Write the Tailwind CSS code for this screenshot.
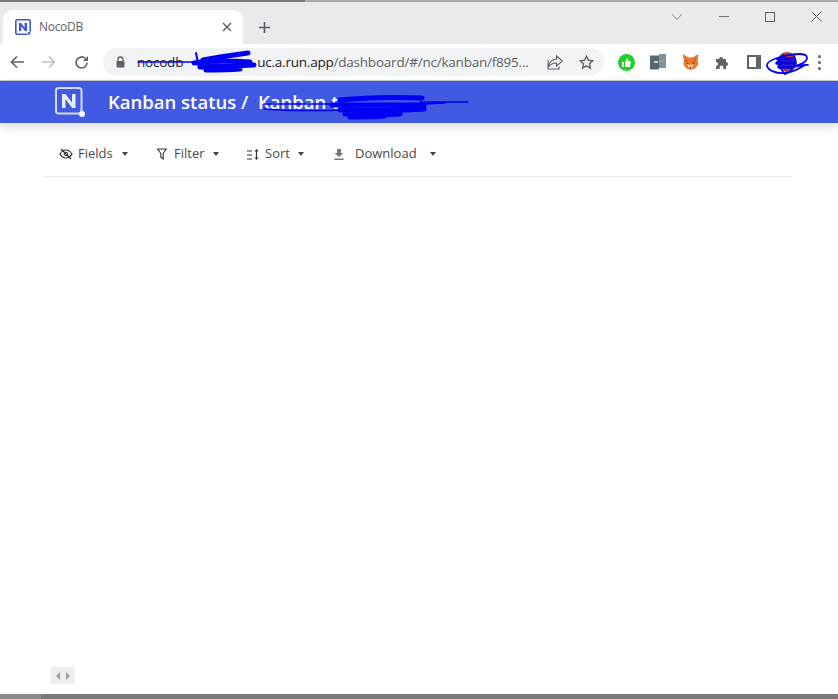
<!DOCTYPE html>
<html>
<head>
<meta charset="utf-8">
<script src="https://cdn.jsdelivr.net/npm/@tailwindcss/browser@4"></script>
</head>
<body class="bg-white">
<div class="relative w-[838px] h-[699px] overflow-hidden flex flex-col bg-white font-['Roboto','Liberation_Sans',sans-serif]">
  <div class="h-[2px] shrink-0 flex"><div class="w-[305px] bg-[#7a7a7a]"></div><div class="flex-1 bg-[#ababab]"></div></div>
  <div class="h-[42px] shrink-0 bg-[#e8eaed] flex items-end relative">
    <div class="ml-[3px] w-[240px] h-[34px] bg-white rounded-t-[9px] flex items-center pl-[12px] pr-[11px]">
      <svg class="w-[16px] h-[16px] shrink-0" viewBox="0 0 16 16"><rect x="0.8" y="0.8" width="14.4" height="14.4" rx="1.5" fill="#fff" stroke="#3e56d8" stroke-width="1.6"/><path d="M4 12V4h2.2l3.4 4.6V4H12v8H9.9L6.3 7.2V12z" fill="#3e56d8"/><circle cx="14" cy="14" r="1.6" fill="#3e56d8" stroke="#fff" stroke-width=".6"/></svg>
      <span class="ml-[8px] text-[12px] text-[#5f6368] flex-1 font-['Open_Sans',sans-serif] tracking-[-0.3px]">NocoDB</span>
      <svg class="w-[10px] h-[10px]" viewBox="0 0 10 10"><path d="M1 1l8 8M9 1l-8 8" stroke="#5f6368" stroke-width="1.5"/></svg>
    </div>
    <svg class="ml-[15px] mb-[10px] w-[13px] h-[13px]" viewBox="0 0 13 13"><path d="M6.5 1v11M1 6.5h11" stroke="#5a5d61" stroke-width="1.6"/></svg>
    <div class="ml-auto mr-[16px] self-start mt-[9px] flex items-center gap-[36px]">
      <svg class="w-[12px] h-[8px]" viewBox="0 0 12 8"><path d="M1 1l5 5.5L11 1" fill="none" stroke="#8a8c90" stroke-width="1"/></svg>
      <div class="w-[10px] h-px bg-[#777]"></div>
      <div class="w-[10px] h-[10px] border border-[#666]"></div>
      <svg class="w-[11px] h-[11px]" viewBox="0 0 11 11"><path d="M.5.5l10 10M10.5.5l-10 10" stroke="#666" stroke-width="1"/></svg>
    </div>
  </div>
  <div class="h-[36px] shrink-0 bg-white flex items-center pl-[10px]">
    <svg class="w-[14px] h-[14px]" viewBox="0 0 14 14"><path d="M14 7H2M7 1.5L1.5 7 7 12.5" fill="none" stroke="#5f6368" stroke-width="1.7"/></svg>
    <svg class="ml-[18px] w-[14px] h-[14px]" viewBox="0 0 14 14"><path d="M0 7h12M7 1.5L12.5 7 7 12.5" fill="none" stroke="#bdc0c4" stroke-width="1.7"/></svg>
    <svg class="ml-[18px] w-[15px] h-[15px]" viewBox="0 0 15 15"><path d="M13 7.5A5.5 5.5 0 1 1 11.3 3.5" fill="none" stroke="#5f6368" stroke-width="1.7"/><path d="M14 1v5H9z" fill="#5f6368"/></svg>
    <div class="ml-[14px] w-[501px] h-[28px] rounded-full bg-[#f1f3f4] flex items-center pl-[13px]">
      <svg class="w-[9px] h-[12px] shrink-0" viewBox="0 0 9 12"><path d="M2 5V3.5a2.5 2.5 0 0 1 5 0V5" fill="none" stroke="#5f6368" stroke-width="1.3"/><rect x="0.5" y="5" width="8" height="6.5" rx="1" fill="#5f6368"/></svg>
      <span class="ml-[12px] text-[13.5px] w-[397px] whitespace-nowrap overflow-hidden font-['Open_Sans',sans-serif] text-[#5f6368] tracking-[-0.22px]"><span class="text-[#202124]">nocodb<span class="inline-block w-[74px]"></span>uc.a.run.app</span>/dashboard/#/nc/kanban/f895...</span>
      <svg class="ml-[13px] w-[16px] h-[15px] shrink-0" viewBox="0 0 16 15"><path d="M9.5 1l6 5-6 5V8C6 8 3.5 9 1.5 12 2 8 4.500 4.500 9.500 4zM1 5v9h11v-2.500" fill="none" stroke="#5f6368" stroke-width="1.100"/></svg>
      <svg class="ml-[16px] w-[15px] h-[15px] shrink-0" viewBox="0 0 15 15"><path d="M7.500 1.300l1.900 4 4.300.5-3.200 3 .9 4.300-3.900-2.200-3.900 2.200.9-4.300-3.200-3 4.300-.5z" fill="none" stroke="#5f6368" stroke-width="1.400"/></svg>
    </div>
    <svg class="ml-[14px] w-[17px] h-[17px]" viewBox="0 0 17 17"><circle cx="8.500" cy="8.500" r="8.500" fill="#1ed02a"/><path d="M4 8h2v5H4zM7 8l2-4c1 0 1.500.8 1.300 2L10 7h3l-1 6H7z" fill="#fff"/></svg>
    <svg class="ml-[15px] w-[16px] h-[16px]" viewBox="0 0 16 16"><rect x="0" y="1.500" width="9" height="14" fill="#546a76"/><rect x="9" y="0" width="7" height="14" fill="#7d949e"/><path d="M4 8h4" stroke="#fff" stroke-width="1.300"/><path d="M9 7h5" stroke="#f0922b" stroke-width="1.300"/></svg>
    <svg class="ml-[16px] w-[17px] h-[16px]" viewBox="0 0 17 16"><path d="M0.500 0l6 3.500h4l6-3.500-1 7 .8 3-2.500 4-3 1.500h-4l-3-1.500-2.500-4 .8-3z" fill="#e8772a"/><path d="M3 5l3 1.500-2 1.500zM14 5l-3 1.500 2 1.500z" fill="#c65f1c"/><path d="M5 10l3.500 1 3.500-1-2 4H7z" fill="#f3d6b8"/><path d="M7.500 13h2l-1 1.500z" fill="#333"/><path d="M4.500 8.200l2 .8-.6 1.200zM12.500 8.200l-2 .8.6 1.200z" fill="#3a2a20"/></svg>
    <svg class="ml-[16px] w-[15px] h-[15px]" viewBox="0 0 15 15"><path d="M1 4h3a2 2 0 1 1 4 0h3v3a2 2 0 1 1 0 4v3H8a2 2 0 1 0-3 0H1v-3a2 2 0 1 0 0-4z" fill="#5f6368"/></svg>
    <div class="ml-[17px] w-[14px] h-[14px] border-[2px] border-r-[5px] border-[#5f6368] bg-white"></div>
    <div class="ml-[16px] w-[20px] h-[20px] rounded-full bg-[#b9411f]"></div>
    <div class="ml-[21px] flex flex-col gap-[3px]">
      <div class="w-[3px] h-[3px] rounded-full bg-[#5f6368]"></div>
      <div class="w-[3px] h-[3px] rounded-full bg-[#5f6368]"></div>
      <div class="w-[3px] h-[3px] rounded-full bg-[#5f6368]"></div>
    </div>
  </div>
  <div class="h-px shrink-0 bg-[#c9cbcf]"></div>
  <header class="h-[42px] shrink-0 bg-[#4259e2] flex items-center pl-[55px] shadow-[0_4px_10px_rgba(0,0,0,0.14)] relative">
    <svg class="w-[30px] h-[30px]" viewBox="0 0 30 30"><rect x="1" y="1" width="25.500" height="25.500" rx="2.500" fill="none" stroke="#d4d9f5" stroke-width="2"/><path d="M7 21V7h3.500l6.500 8.500V7h3.500v14h-3.300l-6.700-8.800V21z" fill="#e8eaf8"/><circle cx="27" cy="27" r="3" fill="#fff"/></svg>
    <h1 class="ml-[23px] text-[18.5px] font-semibold text-white whitespace-nowrap font-['Open_Sans',sans-serif]">Kanban status / <span class="ml-[5px]">Kanban tr</span></h1>
  </header>
  <div class="mx-[43px] w-[749px] h-[54px] shrink-0 border-b border-[#ececec] flex items-center pl-[16px] pt-[9px] text-[13px] text-[#4a4a4a] font-['Open_Sans',sans-serif]">
    <div class="flex items-center w-[97px]">
      <svg class="w-[14px] h-[14px]" viewBox="0 0 14 14"><path d="M1 7s2.300-4 6-4 6 4 6 4-2.300 4-6 4-6-4-6-4z" fill="none" stroke="#333" stroke-width="1.200"/><circle cx="7" cy="7" r="1.800" fill="none" stroke="#333"/><path d="M2 2l10 10" stroke="#333" stroke-width="1.200"/></svg>
      <span class="ml-[5px]">Fields</span>
      <span class="ml-[9px] w-0 h-0 border-x-[3.500px] border-x-transparent border-t-[4px] border-t-[#444]"></span>
    </div>
    <div class="flex items-center w-[90px]">
      <svg class="ml-[1px] w-[10px] h-[12px]" viewBox="0 0 11 13"><path d="M.8 1h9.400L6.800 6v6L4.200 10V6z" fill="none" stroke="#333" stroke-width="1.200"/></svg>
      <span class="ml-[7px]">Filter</span>
      <span class="ml-[8px] w-0 h-0 border-x-[3.500px] border-x-transparent border-t-[4px] border-t-[#444]"></span>
    </div>
    <div class="flex items-center w-[86px]">
      <svg class="w-[14px] h-[13px]" viewBox="0 0 14 13"><path d="M1 3h5M1 7h5M1 11h5M10.500 2v9" stroke="#333" stroke-width="1.200" fill="none"/><path d="M8.500 3.500l2-2.500 2 2.500M8.500 9.500l2 2.500 2-2.500" fill="#333"/></svg>
      <span class="ml-[5px]">Sort</span>
      <span class="ml-[8px] w-0 h-0 border-x-[3.500px] border-x-transparent border-t-[4px] border-t-[#444]"></span>
    </div>
    <div class="flex items-center">
      <svg class="ml-[1px] w-[12px] h-[12px]" viewBox="0 0 12 12"><path d="M4 1h4v4h2.500L6 9 1.500 5H4zM1.500 10.500h9V12h-9z" fill="#777"/></svg>
      <span class="ml-[10px]">Download</span>
      <span class="ml-[13px] w-0 h-0 border-x-[3.500px] border-x-transparent border-t-[4px] border-t-[#444]"></span>
    </div>
  </div>
  <div class="flex-1"></div>
  <div class="ml-[51px] mb-[10px] w-[24px] h-[17px] bg-[#eeeeee] flex items-center justify-center gap-[6px] shrink-0">
    <span class="w-0 h-0 border-y-[4px] border-y-transparent border-r-[4px] border-r-[#a0a0a0]"></span>
    <span class="w-0 h-0 border-y-[4px] border-y-transparent border-l-[4px] border-l-[#a0a0a0]"></span>
  </div>
  <div class="h-[5px] shrink-0 flex"><div class="w-[41px] bg-[#8a8a8a]"></div><div class="flex-1 bg-[#7a7a7a]"></div></div>
  <svg class="absolute left-0 top-0 w-[838px] h-[130px] pointer-events-none" viewBox="0 0 838 130" fill="none" stroke="#0000f5" stroke-linecap="round" stroke-linejoin="round">
    <path d="M138 62H195" stroke-width="1.300"/>
    <path d="M203 60c15-3 30-5 45-7M194 63c20-3 40-2 56-1M200 67c18-1 36-1 54-2M206 70c12 0 22 0 34-1" stroke-width="5"/>
    <path d="M196 53l3 15" stroke-width="2"/>
    <path d="M340 100c30-3 55-3 82-2M332 105H424M340 110c30 0 60 1 84-1M345 114c20 2 40 1 55 0M350 117c15 0 25 0 34-1" stroke-width="5"/>
    <path d="M264 104H340M264 109c25 2 50 2 80 1M420 102H468M400 105l45-2" stroke-width="1.300"/>
    <path d="M767 66c-1-5 9-8 17-10 10-2 23-4 23 2 0 4-8 8-17 9 6 0 15-3 18-2M767 66c1 4 9 8 18 7 10-1 15-5 20-8M783 55c-4 5-4 14 2 19 6-1 12-10 9-18" stroke-width="1.800"/>
    <path d="M778 59h14M777 63h18M779 67h12" stroke-width="3.500"/>
  </svg>
</div>
</body>
</html>
